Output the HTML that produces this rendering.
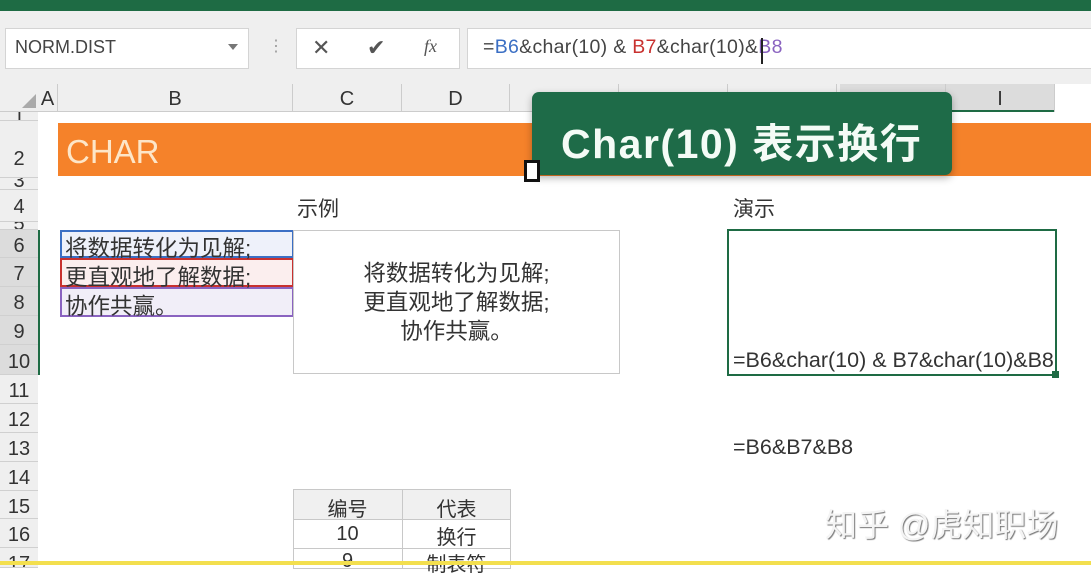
<!DOCTYPE html><html><head><meta charset="utf-8"><style>
*{margin:0;padding:0;box-sizing:border-box}
body{width:1091px;height:565px;overflow:hidden;background:#fff;font-family:"Liberation Sans","Noto Sans CJK SC",sans-serif;position:relative;color:#222}
.a{position:absolute}
.rh{position:absolute;left:0;width:38px;background:#efefef;border-bottom:1px solid #d0d0d0;text-align:center;font-size:20px;color:#333;overflow:hidden}
.ch{position:absolute;top:84px;height:28px;border-right:1px solid #ccc;text-align:center;font-size:20px;line-height:30px;color:#333}
.t{position:absolute;font-size:19px;color:#333;white-space:nowrap}
</style></head><body>
<div class="a" style="left:0;top:0;width:1091px;height:11px;background:#1e6b44"></div>
<div class="a" style="left:0;top:11px;width:1091px;height:73px;background:#efefef"></div>
<div class="a" style="left:5px;top:28px;width:244px;height:41px;background:#fff;border:1px solid #d4d4d4"></div>
<div class="t" style="left:15px;top:37px;font-size:18px;color:#444">NORM.DIST</div>
<div class="a" style="left:228px;top:44px;width:0;height:0;border-left:5px solid transparent;border-right:5px solid transparent;border-top:6px solid #777"></div>
<div class="t" style="left:268px;top:36px;color:#999;font-size:16px">⋮</div>
<div class="a" style="left:296px;top:28px;width:164px;height:41px;background:#fff;border:1px solid #d4d4d4"></div>
<div class="t" style="left:312px;top:35px;font-size:22px;color:#555">✕</div>
<div class="t" style="left:367px;top:35px;font-size:22px;color:#555">✔</div>
<div class="t" style="left:424px;top:36px;font-size:18px;color:#555;font-style:italic;font-family:'Liberation Serif',serif">fx</div>
<div class="a" style="left:467px;top:28px;width:630px;height:41px;background:#fff;border:1px solid #d4d4d4"></div>
<div class="t" style="left:483px;top:36px;font-size:19.5px;color:#444;letter-spacing:0.3px">=<span style="color:#3b6fc4">B6</span>&amp;char(10) &amp; <span style="color:#c8312f">B7</span>&amp;char(10)&amp;<span style="color:#8a63c0">B8</span></div>
<div class="a" style="left:761px;top:38px;width:2px;height:26px;background:#222"></div>
<div class="a" style="left:0;top:84px;width:1091px;height:28px;background:#efefef;border-bottom:1px solid #ccc"></div>
<div class="a" style="left:1055px;top:84px;width:36px;height:28px;background:#fff"></div>
<div class="a" style="left:840px;top:84px;width:215px;height:28px;background:#dcdcdc;border-bottom:2px solid #1e6b44"></div>
<div class="a" style="left:22px;top:94px;width:0;height:0;border-left:14px solid transparent;border-bottom:14px solid #aaa"></div>
<div class="ch" style="left:38px;width:20px">A</div>
<div class="ch" style="left:58px;width:235px">B</div>
<div class="ch" style="left:293px;width:109px">C</div>
<div class="ch" style="left:402px;width:108px">D</div>
<div class="ch" style="left:510px;width:109px"></div>
<div class="ch" style="left:619px;width:109px"></div>
<div class="ch" style="left:728px;width:109px"></div>
<div class="ch" style="left:837px;width:109px"></div>
<div class="ch" style="left:946px;width:109px">I</div>
<div class="rh" style="top:112px;height:9px;line-height:8px">1</div>
<div class="rh" style="top:121px;height:57px;line-height:76px">2</div>
<div class="rh" style="top:178px;height:12px;line-height:6px">3</div>
<div class="rh" style="top:190px;height:32px;line-height:34px">4</div>
<div class="rh" style="top:222px;height:8px;line-height:4px">5</div>
<div class="rh" style="top:230px;height:28px;line-height:32px;background:#dcdcdc">6</div>
<div class="rh" style="top:258px;height:29px;line-height:32px;background:#dcdcdc">7</div>
<div class="rh" style="top:287px;height:29px;line-height:32px;background:#dcdcdc">8</div>
<div class="rh" style="top:316px;height:29px;line-height:32px;background:#dcdcdc">9</div>
<div class="rh" style="top:345px;height:30px;line-height:34px;background:#dcdcdc">10</div>
<div class="rh" style="top:375px;height:29px;line-height:32px">11</div>
<div class="rh" style="top:404px;height:29px;line-height:32px">12</div>
<div class="rh" style="top:433px;height:29px;line-height:32px">13</div>
<div class="rh" style="top:462px;height:29px;line-height:32px">14</div>
<div class="rh" style="top:491px;height:28px;line-height:32px">15</div>
<div class="rh" style="top:519px;height:29px;line-height:32px">16</div>
<div class="rh" style="top:548px;height:20px;line-height:32px">17</div>
<div class="a" style="left:38px;top:230px;width:2px;height:145px;background:#1e6b44"></div>
<div class="a" style="left:58px;top:123px;width:1033px;height:53px;background:#f5822a"></div>
<div class="t" style="left:66px;top:133px;font-size:33px;color:#fde6c8">CHAR</div>
<div class="t" style="left:297px;top:193px;font-size:21px">示例</div>
<div class="t" style="left:733px;top:193px;font-size:21px">演示</div>
<div class="a" style="left:60px;top:230px;width:234px;height:28px;background:#eef1fa;border:2px solid #3b6fc4"></div>
<div class="a" style="left:60px;top:258px;width:234px;height:29px;background:#fbeeee;border:2px solid #c8312f"></div>
<div class="a" style="left:60px;top:287px;width:234px;height:30px;background:#f1eef8;border:2px solid #8a63c0"></div>
<div class="t" style="left:65px;top:231px;font-size:22.5px">将数据转化为见解;</div>
<div class="t" style="left:65px;top:260px;font-size:22.5px">更直观地了解数据;</div>
<div class="t" style="left:65px;top:289px;font-size:22.5px">协作共赢。</div>
<div class="a" style="left:293px;top:230px;width:327px;height:144px;border:1px solid #c8c8c8"></div>
<div class="t" style="left:293px;top:259px;width:327px;text-align:center;line-height:29px;font-size:22.5px">将数据转化为见解;<br>更直观地了解数据;<br>协作共赢。</div>
<div class="a" style="left:727px;top:229px;width:330px;height:147px;border:2px solid #1e6b44"></div>
<div class="a" style="left:1052px;top:371px;width:7px;height:7px;background:#1e6b44"></div>
<div class="t" style="left:733px;top:348px;font-size:21.5px">=B6&amp;char(10) &amp; B7&amp;char(10)&amp;B8</div>
<div class="t" style="left:733px;top:435px;font-size:21.5px">=B6&amp;B7&amp;B8</div>
<div class="a" style="left:293px;top:489px;width:218px;height:30px;background:#f0f0f0"></div>
<div class="a" style="left:293px;top:489px;width:218px;height:80px;border:1px solid #c8c8c8"></div>
<div class="a" style="left:402px;top:489px;width:1px;height:80px;background:#c8c8c8"></div>
<div class="a" style="left:293px;top:519px;width:218px;height:1px;background:#c8c8c8"></div>
<div class="a" style="left:293px;top:548px;width:218px;height:1px;background:#c8c8c8"></div>
<div class="t" style="left:293px;top:493px;width:109px;text-align:center;font-size:20px">编号</div>
<div class="t" style="left:402px;top:493px;width:109px;text-align:center;font-size:20px">代表</div>
<div class="t" style="left:293px;top:523px;width:109px;text-align:center;font-size:20px">10</div>
<div class="t" style="left:402px;top:521px;width:109px;text-align:center;font-size:20px">换行</div>
<div class="t" style="left:293px;top:550px;width:109px;text-align:center;font-size:20px">9</div>
<div class="t" style="left:402px;top:548px;width:109px;text-align:center;font-size:20px">制表符</div>
<div class="a" style="left:532px;top:92px;width:420px;height:83px;background:#1e6b48;border-radius:7px;box-shadow:0 3px 8px rgba(0,0,0,.3)"></div>
<div class="t" style="left:561px;top:110px;font-size:41px;color:#f4fbf6;font-weight:bold;letter-spacing:1.5px">Char(10) 表示换行</div>
<div class="a" style="left:524px;top:160px;width:16px;height:22px;background:#fff;border:3px solid #111"></div>
<div class="t" style="left:825px;top:500px;font-size:32px;color:#f4f4f4;text-shadow:1px 1px 1px #777">知乎 @虎知职场</div>
<div class="a" style="left:0;top:561px;width:1091px;height:4px;background:#f3df4e"></div>
</body></html>
